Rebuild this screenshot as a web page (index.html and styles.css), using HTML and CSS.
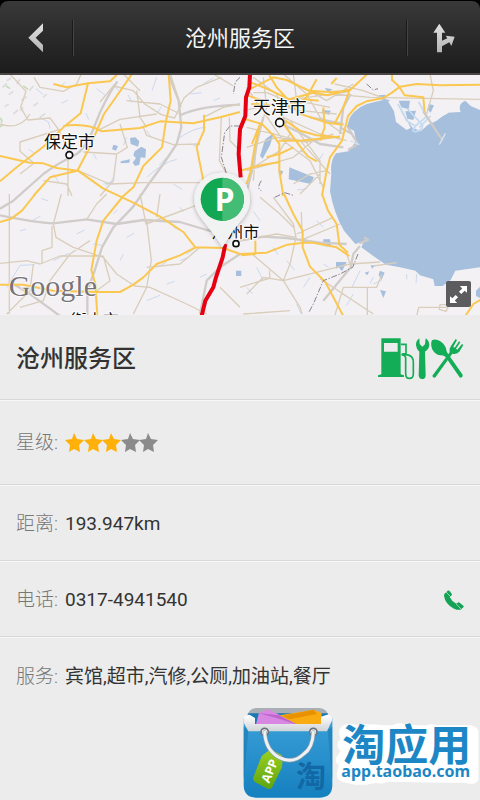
FILE: index.html
```
<!DOCTYPE html>
<html lang="zh-CN">
<head>
    <meta charset="UTF-8">
    <meta name="viewport" content="width=device-width, initial-scale=1.0">
    <title>沧州服务区</title>
    <link rel="stylesheet" href="styles.css">
</head>
<body>

<div class="page">
    <div class="topbar">
        <header class="header">
            <button class="header-btn" type="button" aria-label="返回">
                <svg width="16" height="30" viewBox="84 69 48 90"><path fill="url(#metal)" d="M85 113 129 70V92L107 113 129 135V157Z"/></svg>
            </button>
            <span class="divider"></span>
            <h1>沧州服务区</h1>
            <span class="divider"></span>
            <button class="header-btn" type="button" aria-label="路线">
                <svg width="22" height="30" viewBox="1299 69 66 90"><path fill="url(#metal)" d="M1318 71 1336 98H1326V122L1342 115 1337 107 1364 110 1354 138 1348 127 1326 139V157H1311V98H1300Z"/></svg>
            </button>
        </header>
    </div>

    <div class="map">
        <svg class="map-canvas" viewBox="0 3 1440 720" preserveAspectRatio="xMidYMid slice">
            <defs>
                <linearGradient id="metal" x1="0" y1="0" x2="0" y2="1">
                    <stop offset="0" stop-color="#e2e2e2"/>
                    <stop offset="1" stop-color="#b4b4b4"/>
                </linearGradient>
                <filter id="pinShadow" x="-20%" y="-20%" width="140%" height="140%">
                    <feDropShadow dx="0" dy="3" stdDeviation="6" flood-color="#000" flood-opacity=".3"/>
                </filter>
            </defs>
            <rect width="1440" height="730" fill="#f4f1f5"/>

            <!-- hills -->
            <g class="hills">
                <path d="M8 40l12-12M26 62l14-10M50 30l10-14M64 80l16-12M14 98l12-8M40 120l14-12M88 50l12-14M100 96l14-10M20 20l14-8M60 110l10-10M120 130l16-12M130 70l10-10"/>
                <path class="green" d="M0 132q8 6 4 14M0 158l8-4M18 36l12 8M70 36l14 10"/>
            </g>

            <!-- sea -->
            <path class="water" d="M1440 108L1412 96 1396 80Q1372 90 1382 114L1340 116 1310 140 1284 152 1262 172 1236 160 1216 126 1198 80 1180 84 1160 76 1124 84Q1074 92 1050 130L1040 160 1062 170 1068 202 1046 232 1008 238Q990 260 994 300L990 352Q1002 420 1032 470L1066 510 1092 502 1084 520 1120 546 1158 572 1200 580 1246 590 1260 604 1300 616 1304 636 1328 636 1352 618 1366 590 1440 580Z"/>
            <path class="land" d="M1164 82l18 30 6 32 32 24 12-6-16-34-18-50M1258 160l12 0 20-14 28-14 26-14 10-14-40 16-60 36z"/>
            <g class="water">
                <path d="M796 196l26-20-12 38-22 40-8-8 12-40zM868 280l74 30-10 20-66-14zM836 288l14 4-6 12-8-4zM390 192l16-2 12 12-4 16-22-8zM404 232l20-14 14 8-2 26-14-2-4 22-12 4-8-10 10-14-8-8zM340 212l14 4-6 14-12-4zM362 262l28-6-2 10-26 2zM1008 564l32 0-14 28-10-12-8 4zM1112 574l14 0-10 10zM1094 596l14-4-6 12zM1140 590l14 6-10 22-8-16zM1140 648l18 4-8 20zM1428 650l12-12v34l-12-6zM974 42l24 4-14 8zM966 108l26 2-4 12-20-4zM900 494l24 4v8l-26-6zM970 496l20 0 4 22-24-2zM708 590h16v16h-16z"/>
                <path d="M1196 80l34 0-4 26-22-6zM1216 112l32-2-8 28-18-4zM1136 64l20-2v16l-20-2zM1286 90l16 4-10 22-10-10z"/>
            </g>
            <path class="canal" d="M1194 90l26 50 26 16 34-28-24-44M1222 104l48 52M1246 158q-16 18 4 14t16-18M1292 126l-34 34"/>

            <!-- rivers -->
            <g class="river">
                <path d="M108 44l22 18M118 130l28 14 4 20M180 40l16-16M184 88l20-10M258 118l8 18M290 44l24 18M338 30l18 20M384 62l12 24M470 10l-14 40M472 118l12-20M540 190q46-30 78-30M570 60l34-4M640 80l20-8M610 30l30-18M440 310q50-46 90-54M500 250l-22 24M86 226l16 10M160 300l16 24M280 240l10 16M310 330l30-6M520 330l26 16M600 210l-20 6M340 310q-8 20-24 24M380 190l-10 24M440 170l14 20"/>
                <path d="M124 374l20 6M96 440l26-14M230 480l24-12M160 560l46-22M20 640l40-66 44-2M280 510l26 4M360 560l10-20M386 410l24-30M520 460l28 12M540 400l10 14M470 580l30-16M540 560l20-8M590 520l-30 20M440 680l40-16M500 630l24-8M380 490l22-12M340 420l12-12M60 470l18-4M620 600l-20 10M650 470l-14-10"/>
                <path d="M758 200l12-24M900 230l24 10M970 238l-12 18M920 344l-28 4M780 440l-20-28M770 580l20 40M860 560l24 28M930 610l-20 30M950 440l20 20M1080 590l-24 50M1120 610l-10 18M1060 660l-20 34M820 520l14 22M740 640l18 20M890 690l14 30M1220 600v16M1250 600l-2 28M970 570l16 10M1120 630l26-12"/>
            </g>

            <!-- railways -->
            <g class="rail">
                <path d="M352 22Q312 80 286 150T230 240Q170 270 130 300L40 380 0 404"/>
                <path d="M506 4L536 80 544 160 530 210 490 270 446 330 400 398 340 460 306 520 284 590 262 650V726M540 124Q600 96 720 92M0 424Q110 446 160 448L260 436 350 450 430 438 540 444 620 468 680 480"/>
                <path d="M790 130L772 200 756 290 738 360M1052 60L1030 100 1020 180M720 500L790 488 860 492 960 506 1040 510M720 540L660 580 620 620 600 720M1080 516L1060 540 1052 580 970 680M40 630L90 660 150 704 180 726"/>
                <path d="M846 150L900 176 960 210 1030 220M930 130L1030 150M1020 160L1056 180"/>
            </g>

            <!-- minor roads -->
            <g class="minor">
                <path d="M30 0L78 52 62 100 84 138 150 132 178 170 204 230M102 10L120 40 190 52 230 30 244 0M300 84l40-48 60 14 34 40 50 32 40 10 28-60 38-32 74-30M300 166l60-30 110-16M180 166L60 204V232L102 268 60 300M130 320L200 330 216 366M204 230V366M360 150L382 220 350 240 250 234M430 160L440 184 520 212 600 210M512 3L544 100M420 50L370 0M440 160L420 130 410 50M234 290L330 330 430 326 600 326M610 130L670 100 720 90M540 120L480 90 380 80M664 130L658 260 680 300M688 130L690 200 720 230M350 240L340 320 300 366M0 150Q60 170 90 120M640 0L700 36"/>
                <path d="M28 360V720M160 450L184 360M160 450L168 490 220 520 310 550 350 600 404 636M156 456V520L126 530V570M0 568L80 560 120 570 180 546 310 546M310 546L330 620 290 650M440 440L454 560 440 640 400 720M420 360L438 450 520 420 600 390M440 580L540 570 600 520M260 436L290 390 320 360M480 360L470 430M100 570L90 650 20 720M270 500L210 540 150 620 130 680 60 700M404 636L450 640 560 690 620 720M660 640L720 700"/>
                <path d="M760 56L800 56 860 80 920 70 1040 54M760 10L830 60 850 130 960 180 1040 200M730 110L820 90 900 110 1010 120M740 220L830 190 920 204 1020 186M740 40L850 200 930 260 970 340M790 10L800 100 770 200 760 320M850 0L920 60 960 130 1030 180M1000 60L1110 70 1440 76M1290 0L1300 50 1280 120M740 290L880 250 940 200 1000 180M1004 30L1090 50 1150 72M830 80L870 180 840 230 760 280M870 140L960 260 960 330M740 160L900 200 990 300M910 40L980 80 1060 30M880 0L890 80 990 100M880 330L930 300 980 290M900 360L960 300"/>
                <path d="M820 370L880 450 888 490 870 570 850 620 790 610 740 660M888 490L830 480 720 500M904 414L906 480M890 480L1000 430M900 500L1020 450M756 540L850 620 900 700 906 720M850 620L970 590 1050 570 1140 564M720 640L810 612 808 590M1004 726L1030 640 1130 640 1146 600M960 614L1120 720M730 720L870 710M1102 640V726M1040 540L1054 580M1250 726L1256 700 1340 700M780 370L840 420 880 460M1120 576L1190 566M1320 692l28 0-10 20-20-6z"/>
            </g>

            <!-- main roads -->
            <g class="major">
                <path d="M160 30L200 40 264 28 330 22 350 3M264 28L242 118 190 160 160 190 130 218 50 280 0 322M396 0L346 72 312 120 286 180 266 226 232 290 190 300 150 310 100 366M190 156Q260 146 306 172L420 162 480 142 580 148 660 130 720 114M0 246L90 266 130 268 170 282 234 290 310 344 400 386 480 428 550 474 586 520 670 522 720 540M506 0L512 80 498 140 486 220 430 276 400 340 370 366 310 440 290 500 274 588 286 630 292 726M612 122V170L590 220 606 300 612 330M106 360L66 410 34 434 0 444M0 632L70 632 160 650 290 654H360L400 632 430 610 470 570 540 544 586 520"/>
                <path d="M720 540L800 536 862 512 910 506 940 506 1010 520 1048 546M852 360L880 420 908 470 908 520 930 578 976 624 1030 726M966 360L984 410 1010 450 1018 512 1044 536M1440 32L1320 34 1250 30 1200 38 1176 56 1150 72 1100 82 1070 96 1044 126 1026 200 990 250 978 300 966 366M1176 0V18L1196 36 1214 64 1270 70 1274 116"/>
                <path d="M744 48L820 10 860 18 926 50 990 54 1048 50 1102 0M744 22L800 44 868 76 940 56 984 64 1052 46M808 4L830 40 876 90 896 118 980 146 1030 152M754 90L800 92 874 96 912 76 956 80M736 136L786 150 820 184 838 210 838 290 850 366M720 290L790 272 840 264M836 130L880 190 922 246 950 262M836 200L900 200 1000 190M856 140L900 170 950 184 1020 190M780 150L764 220 752 290 740 330M780 150L756 210M800 250L838 240 880 220M950 16L920 70 890 100M994 30L1010 12M1048 50L1030 100 1004 148M970 100L974 160 960 200M740 64L790 80M724 544L766 540V500M1396 726L1420 690 1440 678"/>
            </g>

            <!-- province borders -->
            <path class="border" d="M720 156H690L674 176 664 250 680 300M720 10L706 24 700 60M1100 30l20 18 14-4M784 320q-16 24 0 30M1074 540L1058 580 1020 600 970 620 940 690 926 716M824 370l30-14 26 8"/>
            <path class="shore" d="M1044 228l24-14 2-10-26-44M1078 508l26-10-12-8M1270 112L1328 200"/>
            <path class="jetty" d="M1318 212l18-34M1050 200l28 12"/>

            <!-- driven route -->
            <path class="route" d="M750 0L748 40 738 70 736 126 720 166 716 240 722 310M676 510L668 550 648 610 640 640 616 680 604 730"/>

            <g class="city">
                <circle cx="208" cy="243" r="10"/>
                <circle cx="839" cy="146" r="12"/>
                <circle cx="708" cy="509" r="9"/>
                <text x="132" y="222" font-size="51">保定市</text>
                <text x="758" y="120" font-size="54">天津市</text>
                <text x="634" y="492" font-size="48">沧州市</text>
                <text x="212" y="756" font-size="48">衡水市</text>
            </g>

            <text class="brand" x="26" y="666" font-size="90">Google</text>

            <!-- pin -->
            <path filter="url(#pinShadow)" fill="#f1f3f2" d="M666 296C617 296 583 331 583 376C583 406 598 427 617 450C637 475 655 500 668 520C679 500 694 475 715 450C735 427 750 406 750 376C750 331 715 296 666 296Z"/>
            <circle cx="667" cy="376" r="65" fill="#12a853"/>
            <path fill="#43bd75" d="M667 311a65 65 0 0 1 0 130z"/>
            <text class="pin-letter" x="674" y="411" font-size="96">P</text>
        </svg>
        <button class="expand" type="button" aria-label="全屏">
            <svg width="17" height="17" viewBox="0 0 57 57"><path fill="#fff" d="M57 0V23L49 16 38 27 30 19 41 8 33 0ZM0 57V34L8 41 19 30 27 38 16 49 24 57Z"/></svg>
        </button>
    </div>

    <main class="info">
        <section class="row row-tall">
            <h2>沧州服务区</h2>
            <svg class="facilities" width="86" height="43" viewBox="54 48 258 129">
                <path fill-rule="evenodd" d="M64 52H122V160L132 163V168H54V163L64 160ZM72 66V92H113V66Z"/>
                <path class="hose" d="M123 70H138V98L126 99M124 101H139Q160 103 160 124V158Q160 172 148 172Q137 172 137 158V112Q137 102 126 102"/>
                <path d="M178 52Q167 60 168 73Q169 84 178 92L176 164Q178 174 187 174Q196 174 197 164L195 92Q207 84 208 72Q207 58 197 52L195 70 187 77 179 69Z"/>
                <path d="M216 58Q226 52 240 60Q258 72 259 88Q260 95 266 101L308 161Q309 170 300 170L256 107Q250 103 241 103Q224 101 216 83Q211 68 216 58Z"/>
                <path d="M287 54L291 57 280 77 284 80 297 61 301 64 288 83 292 86 306 69 310 72 298 92Q288 101 277 98L227 168Q220 174 217 164L269 94Q266 84 273 75Z"/>
            </svg>
        </section>
        <section class="row row-tall">
            <span class="label">星级:</span>
            <svg class="stars" width="94" height="20" viewBox="0 0 94 20" role="img" aria-label="3星">
                <defs><path id="star" d="M9 0L12 6 19 7 14 12 15 19 9 16 4 19 5 12 0 7 7 6Z"/></defs>
                <use href="#star" class="on"/>
                <use href="#star" class="on" x="19"/>
                <use href="#star" class="on" x="37"/>
                <use href="#star" x="56"/>
                <use href="#star" x="74"/>
            </svg>
        </section>
        <section class="row">
            <span class="label">距离:</span>
            <span>193.947km</span>
        </section>
        <section class="row">
            <span class="label">电话:</span>
            <span>0317-4941540</span>
            <a class="call" href="tel:03174941540" aria-label="拨打电话">
                <svg width="20" height="20" viewBox="0 0 60 60"><path d="M1 12L11 2Q14 0 17 3L23 11Q25 14 22 17L17 21Q23 34 37 41L41 38Q44 36 47 38L58 47Q60 49 58 52L50 59Q42 61 30 56Q4 43 0 18Z"/><path class="gap" d="M6 6L20 20M37 42L52 58"/></svg>
            </a>
        </section>
        <section class="row row-last">
            <span class="label">服务:</span>
            <span>宾馆,超市,汽修,公厕,加油站,餐厅</span>
        </section>
    </main>

    <footer class="promo">
        <svg width="237" height="95" viewBox="40 165 711 285">
            <defs>
                <linearGradient id="bag" x1="0" y1="0" x2="0" y2="1">
                    <stop offset="0" stop-color="#3a9fd8"/>
                    <stop offset="1" stop-color="#1580bf"/>
                </linearGradient>
                <linearGradient id="rim" x1="0" y1="0" x2="0" y2="1">
                    <stop offset="0" stop-color="#fff"/>
                    <stop offset="1" stop-color="#cfd4d8"/>
                </linearGradient>
                <linearGradient id="tag" x1="0" y1="0" x2="0" y2="1">
                    <stop offset="0" stop-color="#9bd020"/>
                    <stop offset="1" stop-color="#5fa510"/>
                </linearGradient>
            </defs>
            <rect x="52" y="174" width="245" height="80" rx="28" fill="#a9afb5"/>
            <path fill="#187ab2" d="M56 190H294V230H56Z"/>
            <path fill="#d888e2" d="M80 220L88 188 116 178 210 224H80Z"/>
            <path fill="#be65cd" d="M88 190L150 196 204 224 140 204Z"/>
            <path fill="#f9ac12" d="M150 196L252 179 276 190 274 222H200Z"/>
            <path fill="#e99100" d="M158 198L252 179 262 192 180 208Z"/>
            <path fill="url(#bag)" d="M42 205L56 222H294L308 204V405Q308 443 268 443H82Q42 443 42 405Z"/>
            <path fill="#1673aa" opacity=".5" d="M56 240L42 390V230ZM294 240L308 390V230Z"/>
            <path fill="url(#rim)" d="M42 205Q44 196 60 194L76 204V222H274V200L292 194Q308 196 308 210L292 244H56L42 218Z"/>
            <text class="bag-mark" x="199" y="410" font-size="90">淘</text>
            <g fill="#fff" stroke="#68717a" stroke-width="5">
                <circle cx="105" cy="246" r="11"/>
                <circle cx="251" cy="246" r="11"/>
            </g>
            <path fill="url(#tag)" d="M122 298L154 314Q160 318 159 325L157 352 128 410Q123 419 114 416L76 396Q69 391 71 382L96 318Z"/>
            <path fill="none" stroke="#8d9daa" stroke-width="13" stroke-linecap="round" d="M105 247Q108 300 148 322T222 312Q249 294 251 247"/>
            <path fill="none" stroke="#eef1f3" stroke-width="9" stroke-linecap="round" d="M105 247Q108 300 148 322T222 312Q249 294 251 247"/>
            <text class="tag-text" transform="translate(118 401) rotate(-67)" font-size="37">APP</text>
            <path fill="#fff" d="M346 224Q362 218 378 224Q420 220 462 226Q476 226 488 226Q512 214 534 226H590Q606 220 616 226H722Q746 228 746 248V388Q744 402 722 402L704 398H660L520 396 470 396Q456 404 440 398L410 404H376L340 396Q320 392 322 370Q324 356 328 346Q314 338 320 322Q328 312 332 304L324 290Q322 276 332 268L328 246Q330 228 346 224Z"/>
            <text class="promo-name" x="338" y="333" font-size="129">淘应用</text>
            <text class="promo-url" x="335" y="381" font-size="48">app.taobao.com</text>
        </svg>
    </footer>
</div>

</body>
</html>
```
FILE: styles.css
```
* {
    box-sizing: border-box;
}
body {
    margin: 0;
    background: #ececec;
    color: #333;
    font-family: Roboto, "Noto Sans CJK SC", sans-serif;
    font-size: 19px;
    line-height: 28px;
}
.page {
    display: flex;
    flex-direction: column;
    min-height: 100vh;
}
h1, h2 {
    margin: 0;
}
svg {
    display: block;
}
button {
    padding: 0;
    border: none;
    background: none;
    cursor: pointer;
}

/* top bar */
.topbar {
    background: #000;
    padding-top: 1px;
}
.header {
    display: flex;
    align-items: center;
    height: 74px;
    padding-top: 2px;
    background: linear-gradient(#393939, #2a2a2a 50%, #1c1c1c);
    border-bottom: 2px solid #4a4646;
    border-radius: 8px 8px 0 0;
}
.header h1 {
    flex: 1;
    padding-top: 2px;
    color: #f4f4f4;
    font-size: 22px;
    font-weight: 400;
    text-align: center;
}
.header-btn {
    display: flex;
    align-items: center;
    justify-content: center;
    width: 72px;
    height: 100%;
}
.divider {
    width: 2px;
    height: 36px;
    background: #181818;
    border-right: 1px solid #444;
}

/* map */
.map {
    position: relative;
}
.map-canvas {
    width: 100%;
    aspect-ratio: 2 / 1;
}
.map-canvas g, .border, .canal, .shore, .route {
    stroke-linejoin: round;
}
.water {
    fill: #a5bfdd;
}
.land {
    fill: #f4f1f5;
}
.canal {
    fill: none;
    stroke: #c5dbf0;
    stroke-width: 5;
}
.hills path {
    fill: none;
    stroke: #dcdcda;
    stroke-width: 5;
}
.hills .green {
    stroke: #c3dcb5;
}
.river {
    fill: none;
    stroke: #b5cbe8;
    stroke-width: 2;
}
.rail {
    fill: none;
    stroke: #d0ccca;
    stroke-width: 7;
}
.minor {
    fill: none;
    stroke: #d9cebb;
    stroke-width: 4;
}
.major {
    fill: none;
    stroke: #fac750;
    stroke-width: 6;
}
.border {
    fill: none;
    stroke: #85858c;
    stroke-width: 3;
    stroke-dasharray: 18 5 4 5;
}
.shore {
    fill: none;
    stroke: #cfcac8;
    stroke-width: 7;
}
.jetty {
    fill: none;
    stroke: #d8e2ee;
    stroke-width: 4;
}
.route {
    fill: none;
    stroke: #e60012;
    stroke-width: 12;
}
.city circle {
    fill: #fff;
    stroke: #111;
    stroke-width: 5;
}
.city text {
    fill: #111;
    stroke: #fff;
    stroke-width: 6;
    paint-order: stroke;
    font-family: "Noto Sans CJK SC", sans-serif;
}
.brand {
    fill: #77757a;
    stroke: #fff;
    stroke-width: 4;
    paint-order: stroke;
    font-family: "Liberation Serif", serif;
}
.pin-letter {
    fill: #fff;
    font-family: "Open Sans", sans-serif;
    font-weight: 700;
    text-anchor: middle;
}
.expand {
    position: absolute;
    right: 9px;
    bottom: 8px;
    display: flex;
    align-items: center;
    justify-content: center;
    width: 25px;
    height: 26px;
    background: #5c5c5e;
    border-radius: 2px;
}

/* details */
.row {
    display: flex;
    align-items: center;
    gap: 7px;
    min-height: 76px;
    padding: 2px 16px 0;
    border-bottom: 1px solid #d8d8d8;
    box-shadow: 0 1px 0 #f8f8f8;
}
.row-tall {
    min-height: 85px;
}
.row-last {
    min-height: 68px;
    padding-top: 12px;
    border-bottom: none;
    box-shadow: none;
}
.row h2 {
    flex: 1;
    padding-top: 2px;
    font-size: 24px;
    font-weight: 500;
}
.label {
    color: #777;
    font-weight: 300;
}
.facilities {
    fill: #14ad57;
}
.hose {
    fill: none;
    stroke: #14ad57;
    stroke-width: 5;
}
.stars {
    fill: #8b8b8b;
}
.stars .on {
    fill: #ffb10a;
}
.call {
    margin-left: auto;
    fill: #14a354;
}
.gap {
    fill: none;
    stroke: #ececec;
    stroke-width: 2;
}

/* promo banner */
.promo {
    display: flex;
    justify-content: flex-end;
    margin-top: auto;
}
.bag-mark {
    fill: #1268a5;
    font-family: "Noto Sans CJK SC", sans-serif;
    font-weight: 700;
}
.tag-text {
    fill: #fff;
    font-family: "Open Sans", sans-serif;
    font-weight: 700;
}
.promo-name {
    fill: #1d87c5;
    font-family: "Noto Sans CJK SC", sans-serif;
    font-weight: 700;
}
.promo-url {
    fill: #1d87c5;
    font-family: "Noto Sans", sans-serif;
    font-weight: 700;
}
```
